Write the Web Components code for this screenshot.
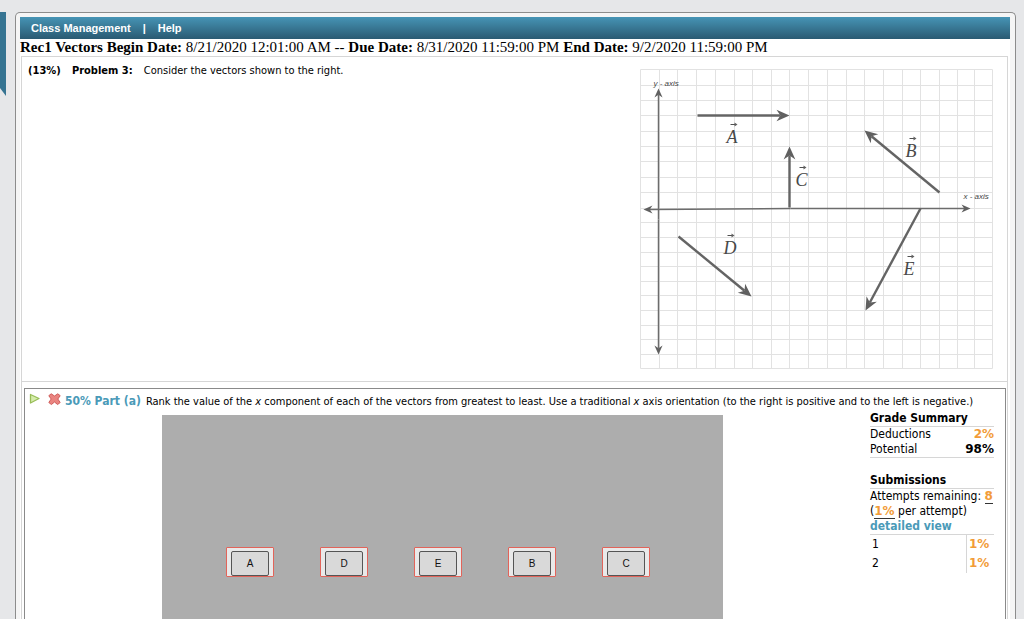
<!DOCTYPE html>
<html lang="en">
<head>
<meta charset="utf-8">
<title>Rec1 Vectors</title>
<style>
	html {
		height			: 100%
	}
	body {
		margin			: 0
	;	height			: 100%
	;	background		: #e6e7e9
	;	color			: #000
	;	font			: 11px/15px "DejaVu Sans Condensed", "Noto Sans", sans-serif
	;	--teal			: #4a9ab8
	;	--orange		: #f29c38
	;	--line			: #d6d6d6
	}
</style>
</head>
<body>

<hw-page>
	<hw-nav slot="nav"></hw-nav>
	<hw-dates slot="dates"></hw-dates>
	<hw-problem weight="13%" number="3">
		Consider the vectors shown to the right.
		<hw-vectors slot="figure"></hw-vectors>
	</hw-problem>
	<hw-part weight="50%" name="Part (a)">
		<span slot="question">Rank the value of the <i>x</i> component of each of the vectors from greatest to least. Use a traditional <i>x</i> axis orientation (to the right is positive and to the left is negative.)</span>
		<hw-ranking items="A D E B C"></hw-ranking>
		<hw-grade slot="grade"></hw-grade>
	</hw-part>
</hw-page>

<script>
const
Shadow = ( $, html ) => $.attachShadow( { mode: 'open' } ).innerHTML = html

////////////////////////////////////////////////////////////////	Page frame
class
Page extends HTMLElement {
	constructor() {
		super()

		Shadow( this, `
			<style>
				:host {
					display			: flex
				;	align-items		: flex-start
				;	gap				: 9px
				;	box-sizing		: border-box
				;	height			: 100%
				;	padding			: 12px 8px 0 0
				;	overflow		: hidden
				}
				.ribbon {
					flex			: none
				;	width			: 6px
				;	height			: 84px
				;	background		: #367492
				;	clip-path		: polygon( 0 0, 100% 0, 100% 100%, 0 76px )
				}
				main {
					flex			: 1
				;	min-width		: 0
				;	align-self		: stretch
				;	display			: flex
				;	flex-direction	: column
				;	box-sizing		: border-box
				;	padding			: 4px 5px 0 4px
				;	background		: #f5f5f5
				;	border			: 1px solid #8c8c8c
				;	border-bottom	: 0
				;	border-radius	: 5px 5px 0 0
				}
				.sheet {
					flex			: 1
				;	display			: flex
				;	flex-direction	: column
				;	background		: #fff
				}
				.content {
					flex			: 1
				;	display			: flex
				;	flex-direction	: column
				;	margin			: 0 2px 0 1px
				;	border			: 1px solid var( --line )
				;	border-bottom	: 0
				}
			</style>
			<div class="ribbon"></div>
			<main>
				<slot name="nav"></slot>
				<div class="sheet">
					<slot name="dates"></slot>
					<div class="content"><slot></slot></div>
				</div>
			</main>
		` )
	}
}
customElements.define( 'hw-page', Page )

////////////////////////////////////////////////////////////////	Menu bar
class
Nav extends HTMLElement {
	constructor() {
		super()

		Shadow( this, `
			<style>
				:host {
					display			: block
				;	background		: linear-gradient( #4694b5, #2a5a72 )
				;	color			: #fff
				;	font			: bold 11px/22px "Liberation Sans", sans-serif
				}
				nav {
					display			: flex
				;	gap				: 12px
				;	padding			: 0 11px
				}
				a {
					color			: inherit
				;	text-decoration	: none
				}
			</style>
			<nav>
				<a href="#class">Class Management</a>
				<span>|</span>
				<a href="#help">Help</a>
			</nav>
		` )
	}
}
customElements.define( 'hw-nav', Nav )

////////////////////////////////////////////////////////////////	Assignment dates
class
Dates extends HTMLElement {
	constructor() {
		super()

		Shadow( this, `
			<style>
				:host {
					display			: block
				;	font			: 15px/17px "Liberation Serif", serif
				}
			</style>
			<b>Rec1 Vectors Begin Date:</b> 8/21/2020 12:01:00 AM -- <b>Due Date:</b> 8/31/2020 11:59:00 PM <b>End Date:</b> 9/2/2020 11:59:00 PM
		` )
	}
}
customElements.define( 'hw-dates', Dates )

////////////////////////////////////////////////////////////////	Problem statement with its figure
class
Problem extends HTMLElement {
	constructor() {
		super()

		Shadow( this, `
			<style>
				:host {
					display			: flex
				;	justify-content	: space-between
				;	align-items		: flex-start
				;	padding			: 6px 14px 12px 6px
				;	border-bottom	: 1px solid var( --line )
				}
				p {
					margin			: 0
				}
				b {
					margin-right	: 8px
				}
				.figure {
					padding-top		: 6px
				}
			</style>
			<p>
				<b>(${ this.getAttribute( 'weight' ) })</b>
				<b>Problem ${ this.getAttribute( 'number' ) }:</b>
				<slot></slot>
			</p>
			<div class="figure"><slot name="figure"></slot></div>
		` )
	}
}
customElements.define( 'hw-problem', Problem )

////////////////////////////////////////////////////////////////	Graph of the vectors
const
COLUMNS	= [ 0, 19, 37, 56, 75, 94, 112, 131, 149, 168, 187, 206, 224, 243, 262, 280, 299, 317, 334, 352 ]
const
ROWS	= [ 0, 16, 31, 46, 62, 77, 92, 108, 123, 139, 153, 168, 183, 197, 212, 226, 241, 256, 270, 285, 299 ]

//	[ x1, y1, x2, y2 ], the head is at ( x2, y2 )
const
AXES	= [
	[ 18, 150, 18, 19 ]
,	[ 18, 150, 18, 285 ]
,	[ 150, 139, 3, 140 ]
,	[ 150, 139, 330, 139 ]
]
const
VECTORS	= [
	{ name: 'A', at: [ 57, 46, 149, 46 ]	, label: [ 86, 73 ] }
,	{ name: 'B', at: [ 299, 123, 224, 61 ]	, label: [ 265, 87 ] }
,	{ name: 'C', at: [ 149, 138, 149, 77 ]	, label: [ 155, 116 ] }
,	{ name: 'D', at: [ 38, 167, 111, 227 ]	, label: [ 83, 184 ] }
,	{ name: 'E', at: [ 280, 139, 225, 241 ]	, label: [ 263, 205 ] }
]

const
Line = ( [ x1, y1, x2, y2 ], cls ) => `<line class="${ cls }" x1="${ x1 }" y1="${ y1 }" x2="${ x2 }" y2="${ y2 }"/>`

const
Arrow = ( [ x1, y1, x2, y2 ], size, cls ) => {
	const angle	= Math.atan2( y2 - y1, x2 - x1 )
	const back	= size * 0.7
	const turn	= angle * 180 / Math.PI
	return Line( [ x1, y1, x2 - back * Math.cos( angle ), y2 - back * Math.sin( angle ) ], cls )
	+	`<path class="head" transform="translate( ${ x2 } ${ y2 } ) rotate( ${ turn } )" d="M0 0L${ -size } ${ -size * 0.45 }L${ -back } 0L${ -size } ${ size * 0.45 }Z"/>`
}

const
Label = ( name, [ x, y ] ) => `
	<text class="name" x="${ x }" y="${ y }">${ name }</text>
	<path class="over" d="M${ x + 4 } ${ y - 18 }h5"/>
	<path class="head" d="M${ x + 11 } ${ y - 18 }l-3 -2v4z"/>
`

class
Vectors extends HTMLElement {
	constructor() {
		super()

		Shadow( this, `
			<style>
				:host {
					display			: block
				}
				svg {
					display			: block
				;	overflow		: visible
				}
				.grid {
					stroke			: #e2e2e2
				}
				.axis {
					stroke			: #6c6c6c
				;	stroke-width	: 1.5
				}
				.vector {
					stroke			: #646464
				;	stroke-width	: 2.4
				}
				.head {
					fill			: #606060
				}
				.over {
					stroke			: #505050
				}
				.name {
					font			: italic 18px "Liberation Serif", serif
				;	fill			: #484848
				}
				.axis-name {
					font			: italic 8px "Liberation Sans", sans-serif
				;	fill			: #444
				}
			</style>
			<svg width="353" height="300" viewBox="-0.5 -0.5 353 300" role="img" aria-label="Vectors A to E">
				${ COLUMNS.map( x => Line( [ x, 0, x, 299 ], 'grid' ) ).join( '' ) }
				${ ROWS.map( y => Line( [ 0, y, 352, y ], 'grid' ) ).join( '' ) }
				${ AXES.map( at => Arrow( at, 9, 'axis' ) ).join( '' ) }
				${ VECTORS.map( _ => Arrow( _.at, 13, 'vector' ) + Label( _.name, _.label ) ).join( '' ) }
				<text class="axis-name" x="13" y="16">y - axis</text>
				<text class="axis-name" x="323" y="129">x - axis</text>
			</svg>
		` )
	}
}
customElements.define( 'hw-vectors', Vectors )

////////////////////////////////////////////////////////////////	One part of the problem
class
Part extends HTMLElement {
	constructor() {
		super()

		Shadow( this, `
			<style>
				:host {
					flex			: 1
				;	display			: flex
				;	flex-direction	: column
				;	margin			: 6px 1px 0 2px
				;	border			: 1px solid #8a8a8a
				;	border-bottom	: 0
				}
				header {
					display			: flex
				;	padding			: 4px 4px 0
				}
				button {
					display			: flex
				;	padding			: 0
				;	border			: 0
				;	background		: none
				}
				.wrong {
					flex			: none
				;	margin			: 0 4px 0 6px
				}
				h2 {
					margin			: 0 5px 0 0
				;	padding-top		: 1px
				;	font			: bold 12px/15px "DejaVu Sans Condensed", sans-serif
				;	color			: var( --teal )
				;	white-space		: nowrap
				}
				.question {
					padding-top		: 1px
				}
				.body {
					flex			: 1
				;	display			: flex
				;	justify-content	: space-between
				;	padding			: 0 11px 0 137px
				}
				.work {
					flex			: 0 1 561px
				;	display			: flex
				;	margin-top		: 6px
				}
			</style>
			<header>
				<button type="button" aria-label="Expand">
					<svg width="13" height="13" viewBox="0 0 13 13">
						<path d="M1.5 1.5L10 5.5L1.5 10Z" fill="#d5ecab" stroke="#98bd58" stroke-width="1.3" stroke-linejoin="round"/>
					</svg>
				</button>
				<svg class="wrong" width="13" height="13" viewBox="0 0 13 13" role="img" aria-label="Incorrect">
					<path d="M3.2 .8L6.5 3L9.8 .8L12.2 2.7L9.8 6L12.2 9.5L9.6 11.5L6.5 9L3.4 11.5L.8 9.5L3.2 6L.8 2.7Z" fill="#ea8480" stroke="#cf5c5a" stroke-linejoin="round"/>
				</svg>
				<h2>${ this.getAttribute( 'weight' ) } ${ this.getAttribute( 'name' ) }</h2>
				<div class="question"><slot name="question"></slot></div>
			</header>
			<div class="body">
				<div class="work"><slot></slot></div>
				<slot name="grade"></slot>
			</div>
		` )
	}
}
customElements.define( 'hw-part', Part )

////////////////////////////////////////////////////////////////	Tiles to be ranked
class
Tile extends HTMLElement {
	constructor() {
		super()

		Shadow( this, `
			<style>
				:host {
					display			: flex
				;	box-sizing		: border-box
				;	width			: 48px
				;	height			: 30px
				;	padding			: 3px 4px 0
				;	border			: 1px solid #e2645a
				;	border-radius	: 1px
				;	background		: #e9e9e9
				}
				button {
					flex			: 1
				;	padding			: 0
				;	border			: 1px solid #555
				;	border-radius	: 2px
				;	background		: #d9d9d9
				;	color			: #111
				;	font			: 10px/24px "Liberation Sans", sans-serif
				}
			</style>
			<button type="button"><slot></slot></button>
		` )
	}
}
customElements.define( 'hw-tile', Tile )

class
Ranking extends HTMLElement {
	constructor() {
		super()

		Shadow( this, `
			<style>
				:host {
					flex			: 1
				;	display			: flex
				;	align-items		: flex-start
				;	gap				: 46px
				;	padding			: 132px 0 0 64px
				;	background		: #adadad
				}
			</style>
			${ this.getAttribute( 'items' ).split( ' ' ).map( _ => `<hw-tile>${ _ }</hw-tile>` ).join( '' ) }
		` )
	}
}
customElements.define( 'hw-ranking', Ranking )

////////////////////////////////////////////////////////////////	Grade summary and submissions
class
Grade extends HTMLElement {
	constructor() {
		super()

		Shadow( this, `
			<style>
				:host {
					flex			: 0 0 124px
				;	padding-top		: 2px
				;	font-size		: 12px
				;	white-space		: nowrap
				}
				h3 {
					margin			: 0
				;	border-bottom	: 1px solid var( --line )
				;	font			: bold 12px/15px "DejaVu Sans Condensed", sans-serif
				}
				p {
					margin			: 0
				}
				table {
					width			: 100%
				;	border-collapse	: collapse
				}
				th, td {
					padding			: 0
				;	font-weight		: normal
				;	text-align		: left
				}
				.summary {
					margin-bottom	: 15px
				;	border-bottom	: 1px solid var( --line )
				}
				.summary td {
					text-align		: right
				}
				td, .cost {
					font			: bold 12px/15px "DejaVu Sans", sans-serif
				}
				a {
					font-weight		: bold
				;	text-decoration	: none
				}
				.cost {
					color			: var( --orange )
				}
				a.cost {
					border-bottom	: 1px solid #333
				}
				.detail {
					color			: var( --teal )
				}
				.tries {
					border-top		: 1px solid var( --line )
				}
				.tries th, .tries td {
					padding			: 2px
				}
				.tries td {
					width			: 23px
				;	border-left		: 1px solid var( --line )
				}
			</style>
			<h3>Grade Summary</h3>
			<table class="summary">
				<tr><th scope="row">Deductions</th><td class="cost">2%</td></tr>
				<tr><th scope="row">Potential</th><td>98%</td></tr>
			</table>
			<h3>Submissions</h3>
			<p>Attempts remaining: <a class="cost" href="#attempts">8</a></p>
			<p>(<a class="cost" href="#deduction">1%</a> per attempt)</p>
			<p><a class="detail" href="#detail">detailed view</a></p>
			<table class="tries">
				<tr><th scope="row">1</th><td class="cost">1%</td></tr>
				<tr><th scope="row">2</th><td class="cost">1%</td></tr>
			</table>
		` )
	}
}
customElements.define( 'hw-grade', Grade )
</script>
</body>
</html>
